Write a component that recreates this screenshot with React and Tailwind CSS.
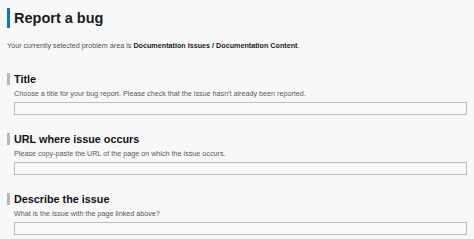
export default function App() {
  const sections = [
    {
      title: "Title",
      desc: "Choose a title for your bug report. Please check that the issue hasn't already been reported.",
    },
    {
      title: "URL where issue occurs",
      desc: "Please copy-paste the URL of the page on which the issue occurs.",
    },
    {
      title: "Describe the issue",
      desc: "What is the issue with the page linked above?",
    },
  ];
  return (
    <div
      className="w-[474px] h-[239px] overflow-hidden bg-[#f8f8f8] pl-[7px] pt-[8px] flex flex-col"
      style={{ fontFamily: '"Liberation Sans", Arial, sans-serif' }}
    >
      <h1 className="border-l-[3px] border-[#1272c4] pl-[4px] h-[20px] leading-[20px] text-[14.5px] font-bold text-[#1b1b1b]">
        Report a bug
      </h1>
      <p className="mt-[13px] text-[7.2px] leading-[10px] text-[#505050]">
        Your currently selected problem area is{" "}
        <span className="font-bold text-[#1b1b1b]">Documentation Issues / Documentation Content</span>.
      </p>
      {sections.map((s, i) => (
        <div key={i} className={i === 0 ? "mt-[22px] flex flex-col" : "mt-[18px] flex flex-col"}>
          <h2 className="border-l-[3px] border-[#b8b8b8] pl-[4px] h-[12px] leading-[12px] text-[10.8px] font-bold text-[#111]">
            {s.title}
          </h2>
          <p className="mt-[4px] ml-[7px] text-[7.2px] leading-[10px] text-[#595959]">{s.desc}</p>
          <div className="mt-[3px] ml-[7px] w-[453px] h-[13px] border border-[#bdbdbd] bg-[#f9f9f9]" />
        </div>
      ))}
    </div>
  );
}
